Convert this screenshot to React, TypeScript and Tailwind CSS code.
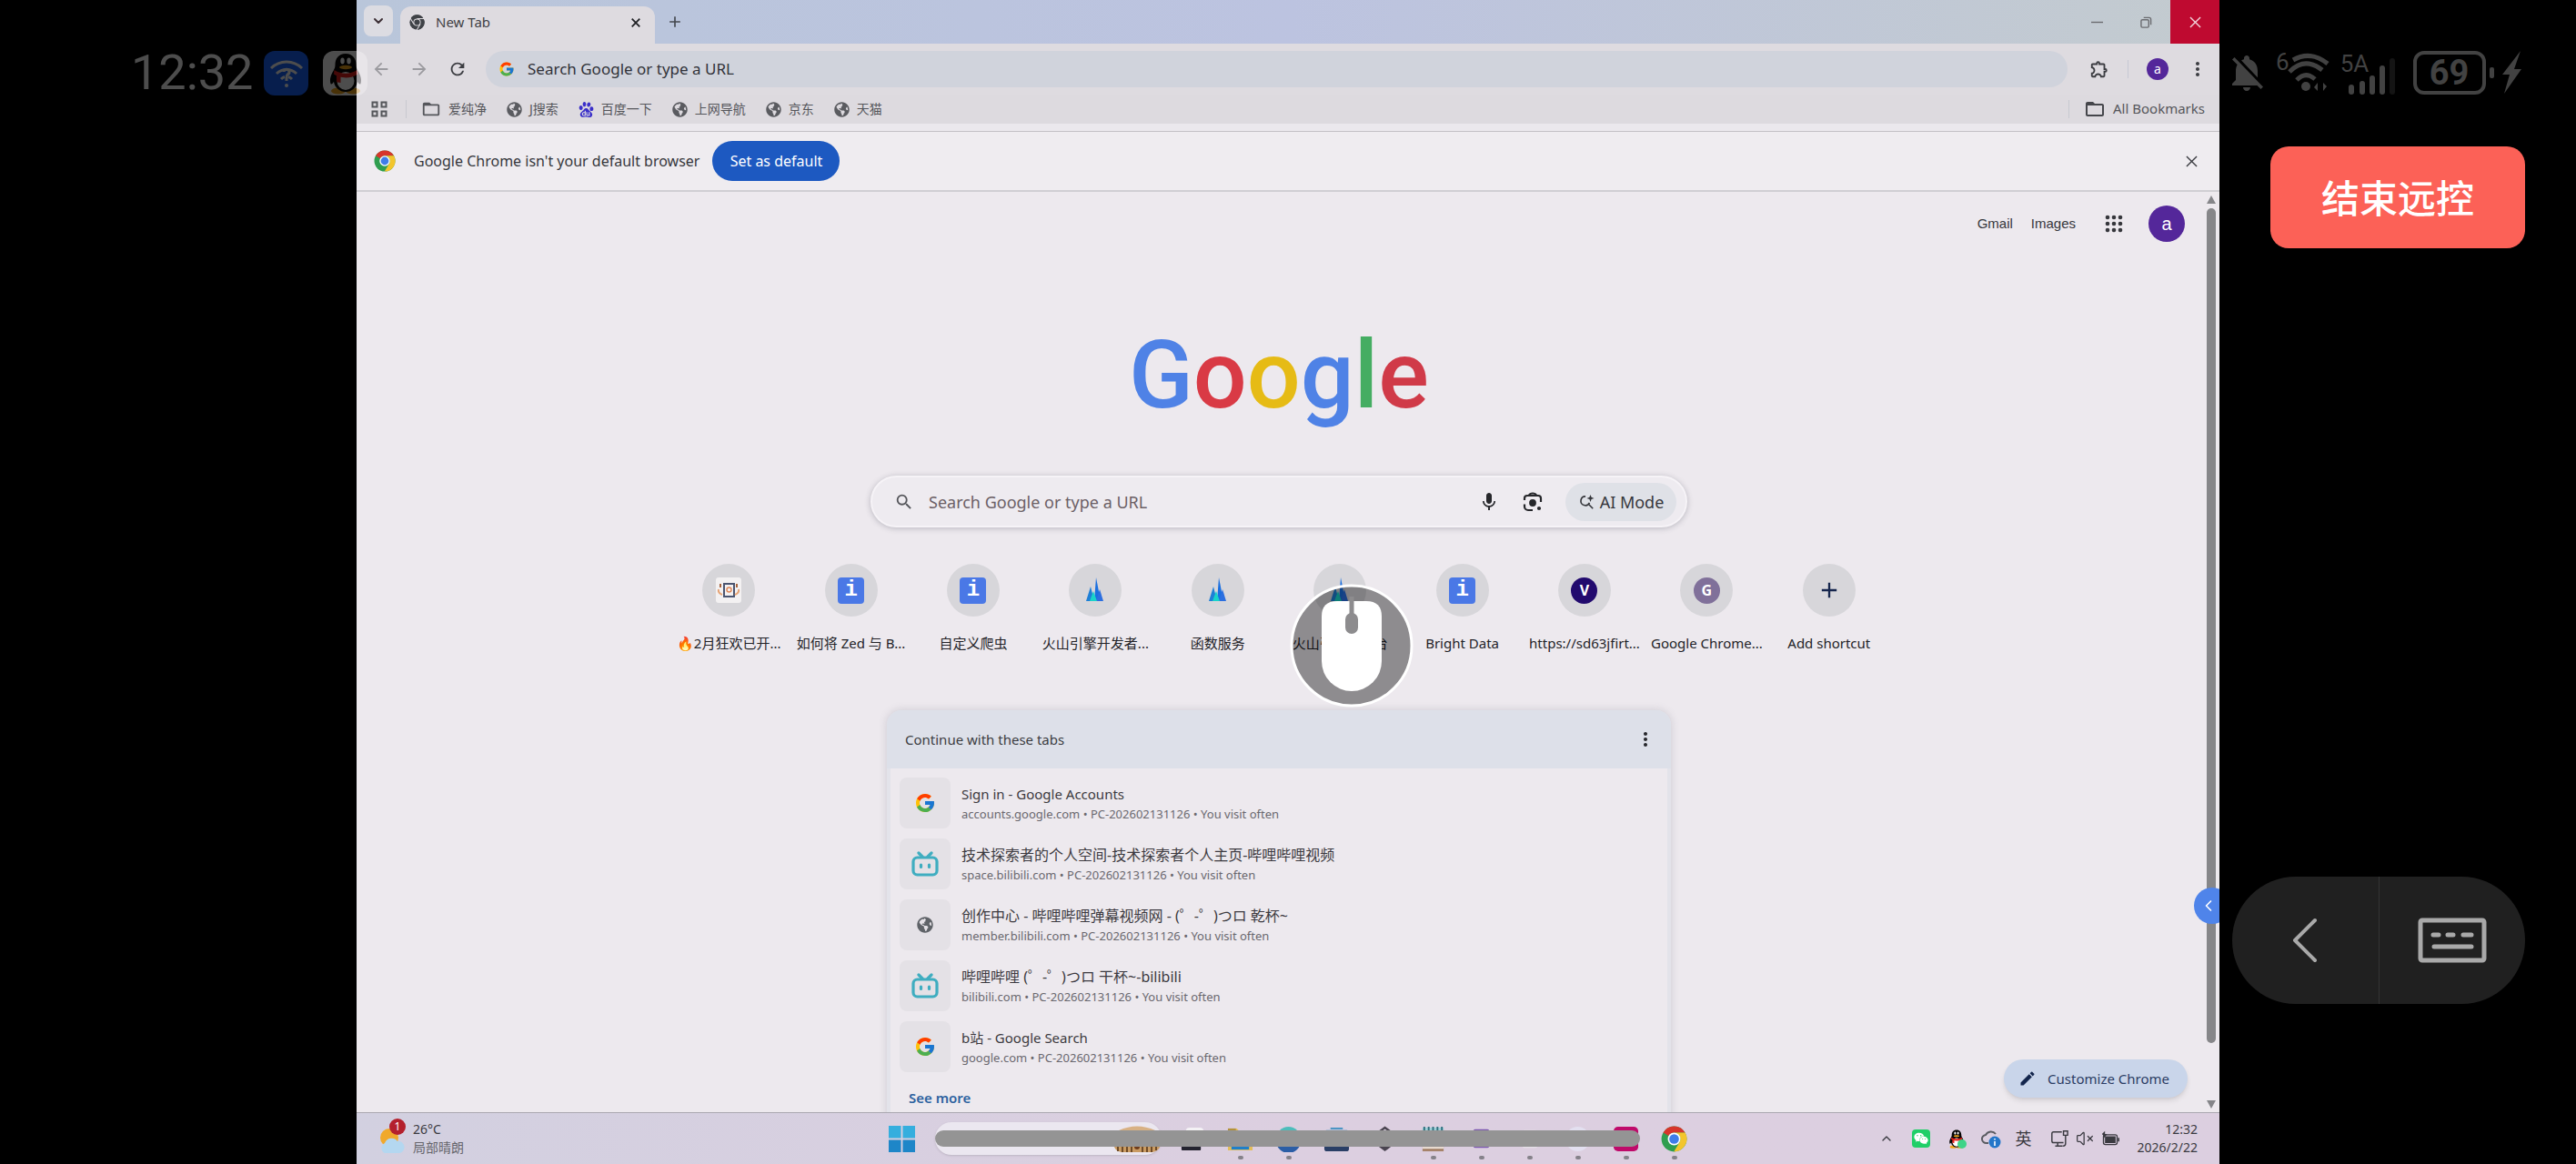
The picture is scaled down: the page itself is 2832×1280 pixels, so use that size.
import type { ReactNode } from "react"
import { FcGoogle } from "react-icons/fc"
import { FaGlobeAmericas, FaWeixin } from "react-icons/fa"
import { SiBaidu } from "react-icons/si"
import {
    MdAdd,
    MdArrowBack,
    MdArrowForward,
    MdEdit,
    MdFolderOpen,
    MdMic,
    MdMoreVert,
    MdNotificationsOff,
    MdOutlineExtension,
    MdRefresh,
    MdSearch,
} from "react-icons/md"
import { ChevronDown, ChevronLeft, ChevronUp, VolumeX } from "lucide-react"

const ChromeLogo = ({ className, mono = false }: { className: string; mono?: boolean }) => {
    const ring = mono ? "#dedbe0" : "#ffffff"
    return (
        <svg viewBox="0 0 48 48" className={className} aria-hidden="true">
            <circle cx="24" cy="24" r="23" fill={mono ? "#3f4247" : "#2f9e4f"} />
            <path d="M24 1a23 23 0 0 1 20 11.6H24a11.5 11.5 0 0 0-10 5.8L4.2 12.3A23 23 0 0 1 24 1z" fill={mono ? "#3f4247" : "#d7352b"} />
            <path d="M44 12.6A23 23 0 0 1 23.5 47L34 29.7A11.5 11.5 0 0 0 24 12.6z" fill={mono ? "#3f4247" : "#f3c52c"} />
            {mono && (
                <g stroke={ring} strokeWidth="3">
                    <path d="M24 12.5H46M14 29.8L3 11M34 29.8L23 48" />
                </g>
            )}
            <circle cx="24" cy="24" r="11.5" fill={ring} />
            <circle cx="24" cy="24" r="8.8" fill={mono ? "#3f4247" : "#3f7de8"} />
        </svg>
    )
}

const Cross = ({ className, strokeWidth }: { className: string; strokeWidth: number }) => (
    <svg viewBox="0 0 14 14" className={className} aria-hidden="true">
        <path d="M1 1l12 12M13 1L1 13" stroke="currentColor" strokeWidth={strokeWidth} />
    </svg>
)

const Penguin = ({ className }: { className: string }) => (
    <svg viewBox="0 0 48 48" className={className} aria-hidden="true">
        <ellipse cx="16" cy="44" rx="8" ry="3.5" fill="#f2a71b" />
        <ellipse cx="32" cy="44" rx="8" ry="3.5" fill="#f2a71b" />
        <path d="M24 3c-8 0-11.5 6-11.5 12 0 3-.5 4-2 7C8 26 6 31 7.500 36c.8 1.500 2.500-.5 3.500-2 1 6 6 11 13 11s12-5 13-11c1 1.500 2.700 3.500 3.500 2C42 31 40 26 37.500 22c-1.500-3-2-4-2-7C35.500 9 32 3 24 3z" fill="#050505" />
        <ellipse cx="24" cy="33" rx="9.5" ry="10" fill="#ffffff" />
        <path d="M11.500 21c8 5 17 5 25 0l1 4.500c-5 3-9 4-13 4l-6-.8V35l-4.500-.7v-7l-3-1.800z" fill="#e3201b" />
        <ellipse cx="20.5" cy="11" rx="2.2" ry="3.4" fill="#ffffff" />
        <ellipse cx="27.5" cy="11" rx="2.2" ry="3.4" fill="#ffffff" />
        <ellipse cx="24" cy="18" rx="7" ry="2.2" fill="#f2a71b" />
    </svg>
)

const PeaksLogo = () => (
    <svg viewBox="0 0 24 30" className="h-[30px] w-6" aria-hidden="true">
        <path d="M13 1l5 26h-7z" fill="#1a6fe0" />
        <path d="M7 11l4 16H2z" fill="#1f7fd6" />
        <path d="M17 14l4 13h-8z" fill="#2c6fe0" />
        <path d="M10 16l4 11H6z" fill="#19d3c9" />
    </svg>
)

const BiliLogo = () => (
    <svg viewBox="0 0 30 28" className="h-7 w-[30px] text-[#3fadc0]" fill="none" stroke="currentColor" strokeWidth="3.2" strokeLinecap="round" aria-hidden="true">
        <rect x="2" y="7" width="26" height="19" rx="4.5" />
        <path d="M8 2l4 4M22 2l-4 4" />
        <path d="M10.500 15v2.500M19.500 15v2.500" />
    </svg>
)

const InfoLogo = () => (
    <span className="flex size-[29px] items-center justify-center rounded-sm bg-[#4a78e6] font-['Liberation_Mono'] text-2xl font-bold text-white">i</span>
)

const FestivalLogo = () => (
    <svg viewBox="0 0 28 28" className="size-7" aria-hidden="true">
        <rect width="28" height="28" rx="3" fill="#f3f1f2" />
        <rect x="9" y="7" width="11" height="14" fill="none" stroke="#4b5570" strokeWidth="2" />
        <circle cx="14.5" cy="13.5" r="2.5" fill="none" stroke="#e0895a" strokeWidth="1.5" />
        <path d="M5 7v4M23 7v4" stroke="#a8643c" strokeWidth="2" />
        <path d="M3 13q-1 4 4 6M25 13q1 4-4 6" fill="none" stroke="#e6a374" strokeWidth="2" />
    </svg>
)

const LetterLogo = ({ letter, className }: { letter: string; className: string }) => (
    <span className={`flex size-[29px] items-center justify-center rounded-full text-base font-bold text-white ${className}`}>{letter}</span>
)

const shortcuts: { label: string; icon: ReactNode }[] = [
    { label: "🔥2月狂欢已开...", icon: <FestivalLogo /> },
    { label: "如何将 Zed 与 B...", icon: <InfoLogo /> },
    { label: "自定义爬虫", icon: <InfoLogo /> },
    { label: "火山引擎开发者...", icon: <PeaksLogo /> },
    { label: "函数服务", icon: <PeaksLogo /> },
    { label: "火山引擎控制台", icon: <PeaksLogo /> },
    { label: "Bright Data", icon: <InfoLogo /> },
    { label: "https://sd63jfirt...", icon: <LetterLogo letter="V" className="bg-[#220a6e]" /> },
    { label: "Google Chrome...", icon: <LetterLogo letter="G" className="bg-[#80709a]" /> },
    { label: "Add shortcut", icon: <MdAdd className="size-7 text-[#16264d]" /> },
]

const recentTabs = [
    { title: "Sign in - Google Accounts", host: "accounts.google.com", icon: <FcGoogle className="size-6" /> },
    { title: "技术探索者的个人空间-技术探索者个人主页-哔哩哔哩视频", host: "space.bilibili.com", icon: <BiliLogo /> },
    { title: "创作中心 - 哔哩哔哩弹幕视频网 - (゜-゜)つロ 乾杯~", host: "member.bilibili.com", icon: <FaGlobeAmericas className="size-[18px] text-[#5f6368]" /> },
    { title: "哔哩哔哩 (゜-゜)つロ 干杯~-bilibili", host: "bilibili.com", icon: <BiliLogo /> },
    { title: "b站 - Google Search", host: "google.com", icon: <FcGoogle className="size-6" /> },
]

const isChinese = (text: string) => /[\u4e00-\u9fff]{2}/.test(text)

const globe = <FaGlobeAmericas className="size-[17px] text-[#5a5b60]" />

const bookmarks = [
    { label: "爱纯净", icon: <MdFolderOpen className="size-[22px]" /> },
    { label: "J搜索", icon: globe },
    { label: "百度一下", icon: <SiBaidu className="size-[17px] text-[#3a2fc9]" /> },
    { label: "上网导航", icon: globe },
    { label: "京东", icon: globe },
    { label: "天猫", icon: globe },
]

const TitleBar = () => (
    <div className="flex h-12 items-end bg-linear-to-r from-[#b9c6da] via-[#bcc3e0] to-[#c3cbcf] pl-2">
        <button aria-label="Search tabs" className="mb-2 flex h-[34px] w-8 items-center justify-center rounded-lg bg-[#dcdce2] text-[#3c2f35]">
            <ChevronDown className="size-4" strokeWidth={3} />
        </button>
        <div className="ml-2 flex h-[41px] w-[280px] items-center rounded-t-xl bg-[#dedbe0] pr-4 pb-1.5 pl-2.5 text-[#3f4045]">
            <ChromeLogo mono className="size-[17px]" />
            <span className="ml-3 flex-1 text-[15px]">New Tab</span>
            <button aria-label="Close tab" className="text-[#1f2024]"><Cross className="size-[10px]" strokeWidth={2.5} /></button>
        </div>
        <button aria-label="New tab" className="mb-3.5 ml-3 text-[#45484f]"><MdAdd className="size-5" /></button>
        <div className="ml-auto flex h-12 text-[#6b6c70]">
            <button aria-label="Minimize" className="flex w-[54px] items-center justify-center">
                <svg viewBox="0 0 14 14" className="size-[13px]"><path d="M0 7h14" stroke="currentColor" strokeWidth="1.5" /></svg>
            </button>
            <button aria-label="Restore" className="flex w-[54px] items-center justify-center">
                <svg viewBox="0 0 14 14" className="size-[13px]" fill="none" stroke="currentColor" strokeWidth="1.5">
                    <rect x="1" y="4" width="9" height="9" rx="1.5" />
                    <path d="M4 1.500h6.500a2 2 0 0 1 2 2V10" />
                </svg>
            </button>
            <button aria-label="Close" className="flex w-[54px] items-center justify-center bg-[#bf0a30] text-[#f1d3da]">
                <Cross className="size-[13px]" strokeWidth={1.5} />
            </button>
        </div>
    </div>
)

const Toolbar = () => (
    <div className="flex h-14 items-center bg-[#dedbe0] pr-3 pl-4">
        <button aria-label="Back" className="text-[#9b9a9f]"><MdArrowBack className="size-[22px]" /></button>
        <button aria-label="Forward" className="ml-5 text-[#9b9a9f]"><MdArrowForward className="size-[22px]" /></button>
        <button aria-label="Reload" className="ml-5 text-[#3c3d42]"><MdRefresh className="size-[22px]" /></button>
        <label className="ml-5 flex h-10 flex-1 items-center rounded-full bg-[#d0d3dc] pl-3.5">
            <FcGoogle className="size-[18px]" />
            <input
                aria-label="Address and search bar"
                placeholder="Search Google or type a URL"
                className="ml-3.5 flex-1 bg-transparent text-[17px] outline-none placeholder:text-[#303239]"
            />
        </label>
        <button aria-label="Extensions" className="ml-6 text-[#3c3d42]"><MdOutlineExtension className="size-[22px]" /></button>
        <span className="ml-5 h-5 w-px bg-[#c6c8d4]" />
        <button aria-label="Profile" className="ml-5 flex size-6 items-center justify-center rounded-full bg-[#54279a] text-sm text-white">a</button>
        <button aria-label="Menu" className="ml-5 text-[#3c3d42]"><MdMoreVert className="size-6" /></button>
    </div>
)

const BookmarksBar = () => (
    <div className="flex h-8 items-center bg-[#dddadf] px-4 text-sm text-[#55565b]">
        <button aria-label="Tab groups">
            <svg viewBox="0 0 18 18" className="size-[18px]" fill="none" stroke="currentColor" strokeWidth="2">
                <path d="M1.500 1.500h5v5h-5zM11.500 1.500h5v5h-5zM1.500 11.500h5v5h-5zM11.500 11.500h5v5h-5z" />
            </svg>
        </button>
        <span className="mr-4 ml-5 h-5 w-px bg-[#c8c9d0]" />
        <nav className="flex items-center gap-[22px]">
            {bookmarks.map((b) => (
                <a key={b.label} href="#" className="flex items-center gap-2">
                    {b.icon}
                    {b.label}
                </a>
            ))}
        </nav>
        <span className="ml-auto h-5 w-px bg-[#c8c9d0]" />
        <button className="ml-4 flex items-center gap-2 text-[15px]">
            <MdFolderOpen className="size-6 text-[#45464b]" />
            All Bookmarks
        </button>
    </div>
)

const InfoBar = () => (
    <div className="flex h-[75px] flex-col bg-[#dddadf]">
        <div className="h-[9px] border-b border-[#c3c1c6] bg-[#ebe8ed]" />
        <div className="flex flex-1 items-center border-b-2 border-[#d0ced3] bg-[#efecf0] pr-6 pl-[19px]">
            <ChromeLogo className="size-6" />
            <span className="ml-5 text-base text-[#36373c]">Google Chrome isn't your default browser</span>
            <button className="ml-3.5 h-11 w-[140px] rounded-full bg-[#1d59c1] text-base text-white">Set as default</button>
            <button aria-label="Dismiss" className="ml-auto text-[#3c3d42]"><Cross className="size-[13px]" strokeWidth={1.5} /></button>
        </div>
    </div>
)

const SearchBox = () => (
    <label className="mt-12 flex h-[57px] w-[898px] shrink-0 items-center rounded-full border-2 border-[#f6f3f7] bg-[#eeebf0] pr-2.5 pl-6 shadow-[0_1px_6px_rgba(60,64,80,0.3)]">
        <MdSearch className="size-[22px] text-[#55565b]" />
        <input
            aria-label="Search"
            placeholder="Search Google or type a URL"
            className="ml-4 flex-1 bg-transparent text-lg outline-none placeholder:text-[#6b6066]"
        />
        <button aria-label="Search by voice"><MdMic className="size-6 text-[#26272b]" /></button>
        <button aria-label="Search by image" className="ml-6">
            <svg viewBox="0 0 24 24" className="size-6 text-[#26272b]" fill="none" stroke="currentColor" strokeWidth="2.2">
                <path d="M3 10V8a3 3 0 0 1 3-3h12a3 3 0 0 1 3 3v4M3 14.500V17a4 4 0 0 0 4 4h5M8 4.500Q9 2.500 12 2.500t4 2" />
                <circle cx="12" cy="13" r="2.8" fill="currentColor" />
                <circle cx="19" cy="19" r="1" fill="currentColor" />
            </svg>
        </button>
        <button className="ml-6 flex h-[42px] w-[122px] items-center justify-center gap-1.5 rounded-full bg-[#dfe1e7] text-lg text-[#36373c]">
            <svg viewBox="0 0 20 20" className="size-[18px] shrink-0" fill="none" stroke="currentColor" strokeWidth="1.8" aria-hidden="true">
                <path d="M9 3.200a5.500 5.500 0 1 0 4.800 7.800M12 12l6 6" />
                <path d="M15 1l1.200 3.300L19.500 5.500l-3.300 1.200L15 10l-1.200-3.300L10.500 5.500l3.300-1.200z" fill="currentColor" stroke="none" />
            </svg>
            AI Mode
        </button>
    </label>
)

const Shortcuts = () => (
    <div className="mt-10 grid w-[1344px] shrink-0 grid-cols-10">
        {shortcuts.map((s, i) => (
            <a key={i} href="#" className="flex flex-col items-center gap-[17px]">
                <span className="flex size-[58px] items-center justify-center rounded-full bg-[#d7d6da]">{s.icon}</span>
                <span className="text-center text-[15px] leading-6 whitespace-nowrap text-[#232328]">{s.label}</span>
            </a>
        ))}
    </div>
)

const TabsCard = () => (
    <section className="mt-[62px] w-[862px] shrink-0 rounded-t-2xl bg-[#e3e3ea] px-1 shadow-[0_0_10px_rgba(90,90,110,0.22)]">
        <div className="-mx-1 flex h-16 items-center justify-between rounded-t-2xl bg-[#dde0e9] pr-4 pl-5 text-[15px] text-[#3c3d42]">
            <h2>Continue with these tabs</h2>
            <button aria-label="More"><MdMoreVert className="size-6 text-[#26272b]" /></button>
        </div>
        <ul className="flex flex-col gap-[11px] bg-[#ede9ee] px-2.5 pt-2.5">
            {recentTabs.map((t) => (
                <li key={t.title}>
                    <a href="#" className="flex items-center gap-3">
                        <span className="flex size-14 items-center justify-center rounded-lg bg-[#e4e1e6]">{t.icon}</span>
                        <span className="flex flex-col">
                            <span className={`leading-6 text-[#3c3a40] ${isChinese(t.title) ? "text-base" : "text-[15px]"}`}>{t.title}</span>
                            <span className="text-[13px] leading-5 text-[#6a686e]">{t.host} • PC-202602131126 • You visit often</span>
                        </span>
                    </a>
                </li>
            ))}
        </ul>
        <div className="bg-[#ede9ee] px-5 pt-4 pb-8">
            <button className="text-[15px] font-semibold text-[#2c629f]">See more</button>
        </div>
    </section>
)

const NewTabPage = () => (
    <main className="relative flex min-h-0 flex-1 bg-[#ede9ee]">
        <div className="flex flex-1 flex-col items-center overflow-hidden">
            <div className="flex h-[70px] shrink-0 items-center self-end pr-[18px] font-['Liberation_Sans'] text-[15px] text-[#36373c]">
                <a href="#">Gmail</a>
                <a href="#" className="ml-5">Images</a>
                <button aria-label="Google apps" className="ml-8">
                    <svg viewBox="0 0 20 20" className="size-5" fill="currentColor">
                        <circle cx="3" cy="3" r="2.3" /><circle cx="10" cy="3" r="2.3" /><circle cx="17" cy="3" r="2.3" />
                        <circle cx="3" cy="10" r="2.3" /><circle cx="10" cy="10" r="2.3" /><circle cx="17" cy="10" r="2.3" />
                        <circle cx="3" cy="17" r="2.3" /><circle cx="10" cy="17" r="2.3" /><circle cx="17" cy="17" r="2.3" />
                    </svg>
                </button>
                <button aria-label="Google account" className="ml-7 flex size-10 items-center justify-center rounded-full bg-[#54279a] text-xl text-white">a</button>
            </div>
            <div className="mt-[78px] h-[116px] shrink-0 font-[Roboto] text-[104px] leading-[108px] font-medium" aria-label="Google">
                <span className="text-[#4f82e6]">G</span>
                <span className="text-[#d93a45]">o</span>
                <span className="text-[#e6bb15]">o</span>
                <span className="text-[#4f82e6]">g</span>
                <span className="text-[#45ad62]">l</span>
                <span className="text-[#d03a48]">e</span>
            </div>
            <SearchBox />
            <Shortcuts />
            <TabsCard />
        </div>
        <div className="flex w-5 flex-col items-end gap-1 py-1 pr-1">
            <svg viewBox="0 0 10 10" className="size-[10px]"><path d="M5 0l5 9H0z" fill="#858589" /></svg>
            <div className="mb-[58px] w-[10px] flex-1 rounded-full bg-[#868689]" />
            <svg viewBox="0 0 10 10" className="size-[10px]"><path d="M5 10l5-9H0z" fill="#858589" /></svg>
        </div>
        <button className="absolute right-[35px] bottom-4 flex h-[42px] items-center gap-3 rounded-full bg-[#c9d5ea] pr-5 pl-4 text-[15px] text-[#2b3c63] shadow-md">
            <MdEdit className="size-5 text-[#14264d]" />
            Customize Chrome
        </button>
    </main>
)

// Upper and lower slices of the icons stay visible around the grey handle
const taskIcons: { name: string; running: boolean; art: ReactNode }[] = [
    { name: "Task view", running: false, art: <><rect x="8" y="2" width="20" height="12" rx="4" fill="#f4f2f5" /><rect x="3" y="14" width="22" height="14" rx="1" fill="#23232f" /></> },
    { name: "File Explorer", running: true, art: <><path d="M1 3h10l3 3h15v22H1z" fill="#e3bd5a" /><rect x="1" y="3" width="9" height="8" fill="#b3923c" /><rect x="5" y="20" width="20" height="7" fill="#1f7fc9" /></> },
    { name: "Edge", running: true, art: <><circle cx="15" cy="15" r="14" fill="#4dbdbb" /><path d="M1 17a14 14 0 0 0 28 0z" fill="#2c5ea6" /></> },
    { name: "Store", running: false, art: <><path d="M8 3h14M3 6h24" stroke="#3a8fc0" strokeWidth="2" /><path d="M1 7h28v19q0 3-3 3H4q-3 0-3-3z" fill="#2a3f66" /></> },
    { name: "Editor", running: false, art: <><path d="M15 2l12 9H3z" fill="none" stroke="#4a4550" strokeWidth="2.5" /><path d="M3 20h24l-12 9z" fill="#4a4550" /></> },
    { name: "Notepad", running: true, art: <><rect x="3" y="4" width="24" height="25" fill="#a6836a" /><path d="M3 2h24v9H3z" fill="#9ed0d8" /><path d="M5 1v7M10 1v7M15 1v7M20 1v7M25 1v7" stroke="#31707e" strokeWidth="2" /><path d="M3 25h24" stroke="#efe6df" strokeWidth="2" /></> },
    { name: "Terminal", running: true, art: <rect x="6" y="4" width="18" height="21" rx="2" fill="#7c57b0" /> },
    { name: "Notes", running: true, art: <rect x="7" y="5" width="17" height="20" rx="2" fill="#e6e1e8" /> },
    { name: "Cloud", running: true, art: <circle cx="15" cy="15" r="14" fill="#e3e0f0" /> },
    { name: "Video", running: true, art: <rect x="1" y="1" width="28" height="28" rx="5" fill="#bf0a6a" /> },
]

const Taskbar = () => (
    <footer className="grid h-[57px] grid-cols-[1fr_auto_1fr] items-center border-t border-[#aaa7b0] bg-linear-to-r from-[#d2d0e0] via-[#dccfe0] to-[#dccfe0] text-sm text-[#3a3a40]">
        <button className="flex items-center gap-2 pl-6 text-left">
            <span className="relative">
                <svg viewBox="0 0 30 36" className="h-9 w-[30px]" aria-hidden="true">
                    <circle cx="12" cy="17" r="10" fill="#f0a92c" />
                    <path d="M7 34a6 6 0 0 1 0-11 8 8 0 0 1 14-2 6.500 6.500 0 0 1 2 13z" fill="#b4d7f0" />
                </svg>
                <span className="absolute -top-1 left-3 flex size-[18px] items-center justify-center rounded-full bg-[#b4202c] text-xs text-white">1</span>
            </span>
            <span className="flex flex-col leading-5">
                <span>26°C</span>
                <span className="text-[#66666c]">局部晴朗</span>
            </span>
        </button>
        <div className="flex items-center">
            <button aria-label="Start" className="flex w-[53px] justify-center">
                <svg viewBox="0 0 30 30" className="size-[29px]" aria-hidden="true">
                    <path d="M0 0h14v14H0zM16 0h14v14H16z" fill="#35aede" />
                    <path d="M0 16h14v14H0zM16 16h14v14H16z" fill="#1e86c8" />
                </svg>
            </button>
            <div className="relative ml-2.5 flex items-center gap-[7px]">
                <div className="flex h-9 w-[249px] items-center justify-end rounded-full bg-[#ebe7f0] shadow-sm">
                    <svg viewBox="0 0 54 32" className="h-8 w-[54px]" aria-hidden="true">
                        <path d="M7 7q20-9 40 0v5H7z" fill="#d8b184" />
                        <path d="M0 20h54q-2 10-10 11H10Q2 30 0 20z" fill="#c99b62" />
                        <path d="M6 23v7M11 23v8M16 23v8M21 23v8M33 23v8M38 23v8M43 23v8M48 23v6" stroke="#6e4a26" strokeWidth="2" />
                        <circle cx="27" cy="25" r="3" fill="#6e3c1c" />
                    </svg>
                </div>
                <div className="flex">
                    {taskIcons.map((t) => (
                        <button key={t.name} aria-label={t.name} className="relative flex w-[53px] justify-center">
                            <svg viewBox="0 0 30 30" className="size-[29px]">{t.art}</svg>
                            {t.running && <span className="absolute -bottom-2 h-1 w-1.5 rounded-full bg-[#85828a]" />}
                        </button>
                    ))}
                    <button aria-label="Chrome" className="relative flex w-[53px] justify-center">
                        <ChromeLogo className="size-[29px]" />
                        <span className="absolute -bottom-2 h-1 w-1.5 rounded-full bg-[#85828a]" />
                    </button>
                </div>
                <div className="absolute right-16 left-0 h-[18px] rounded-full bg-[#949494]" />
            </div>
        </div>
        <div className="flex items-center justify-end pr-6">
            <ChevronUp className="size-4" />
            <span className="ml-5 flex size-5 items-center justify-center rounded-sm bg-[#20cf68]"><FaWeixin className="size-4 text-white" /></span>
            <span className="relative ml-[18px]">
                <Penguin className="size-[22px]" />
                <span className="absolute right-0 bottom-0 size-2.5 rounded-full bg-[#3fd488]" />
            </span>
            <span className="relative ml-4">
                <svg viewBox="0 0 22 22" className="size-[22px]" fill="none" stroke="#5a5c62" strokeWidth="2" aria-hidden="true">
                    <path d="M8 16H6a4.500 4.500 0 0 1-1-9 6.500 6.500 0 0 1 11-1" />
                    <circle cx="15" cy="15" r="6.5" fill="#2376c9" stroke="none" />
                    <path d="M15 14v5M15 11v1.500" stroke="#ffffff" strokeWidth="1.6" />
                </svg>
            </span>
            <span className="ml-4 text-lg">英</span>
            <svg viewBox="0 0 22 22" className="ml-5 size-5" fill="none" stroke="currentColor" strokeWidth="1.6" aria-hidden="true">
                <path d="M14 3H4a2 2 0 0 0-2 2v9a2 2 0 0 0 2 2h12M6 20h9M9 16v4M16 2h5v5h-5zM18.500 7v10a3 3 0 0 1-3 3" />
            </svg>
            <VolumeX className="ml-2 size-5" strokeWidth={1.5} />
            <svg viewBox="0 0 24 22" className="ml-2 size-5" aria-hidden="true">
                <rect x="3" y="6" width="18" height="13" rx="2.5" fill="none" stroke="currentColor" strokeWidth="1.6" />
                <path d="M5 8h14v9H5zM22 10h2v5h-2zM1 5l4-4v4h3L3 11V7z" fill="currentColor" />
            </svg>
            <div className="ml-5 text-right leading-5">
                <div>12:32</div>
                <div>2026/2/22</div>
            </div>
        </div>
    </footer>
)

const MouseOverlay = () => (
    <div className="absolute top-[55.5%] left-[53.4%] -translate-x-1/2 -translate-y-1/2">
        <svg viewBox="0 0 136 136" className="size-[136px]" aria-hidden="true">
            <circle cx="68" cy="68" r="66" fill="#000000" fillOpacity="0.4" stroke="#ffffff" strokeWidth="3" />
            <path d="M35 36q0-17 17-17h32q17 0 17 17v49a33 33 0 0 1-66 0z" fill="#ffffff" />
            <path d="M68 14v20" stroke="#8d8c8e" strokeWidth="5" />
            <rect x="61" y="32" width="14" height="23" rx="7" fill="#8d8c8e" />
        </svg>
    </div>
)

const App = () => {
    return (
        <div className="flex h-screen overflow-hidden bg-black font-['Noto_Sans','Noto_Sans_CJK_SC',sans-serif]">
            <aside className="relative z-10 min-w-0 flex-1">
                <div className="flex items-center gap-4 pt-[46px] pl-36 opacity-30">
                    <span className="w-[130px] shrink-0 font-[Roboto] text-[54px] leading-[68px] text-white">12:32</span>
                    <span className="flex size-[49px] shrink-0 items-center justify-center rounded-xl bg-[#1763ff]">
                        <svg viewBox="0 0 40 40" className="size-10" fill="none" stroke="#ffffff" strokeWidth="3" aria-hidden="true">
                            <path d="M3 15a24 24 0 0 1 34 0M9 21a16 16 0 0 1 22 0M14 27a9 9 0 0 1 4-2.500M26 27a9 9 0 0 0-4-2.500" />
                            <path d="M17 19a3 3 0 1 1 4 3q-1 1-1 4v3" />
                            <circle cx="20" cy="34" r="2" fill="#ffffff" stroke="none" />
                        </svg>
                    </span>
                    <span className="flex size-[49px] shrink-0 items-center justify-center rounded-xl bg-white">
                        <Penguin className="size-12" />
                    </span>
                </div>
            </aside>

            <div className="relative flex aspect-[8/5] h-full shrink-0 flex-col overflow-hidden">
                <TitleBar />
                <Toolbar />
                <BookmarksBar />
                <InfoBar />
                <NewTabPage />
                <Taskbar />
                <MouseOverlay />
                <button aria-label="Open side panel" className="absolute top-[976px] -right-3 flex size-10 items-center rounded-full bg-[#4f84ea] pl-1.5 text-white">
                    <ChevronLeft className="size-5" />
                </button>
            </div>

            <aside className="flex min-w-0 flex-1 flex-col">
                <div className="flex h-[161px] shrink-0 items-start pt-14 pl-2.5 font-[Roboto] text-[#424242]">
                    <MdNotificationsOff className="-ml-1 size-12 shrink-0" />
                    <span className="ml-2 flex shrink-0">
                        <span className="text-[26px] leading-6">6</span>
                        <svg viewBox="0 0 46 44" className="-ml-0.5 h-11 w-[46px]" fill="none" stroke="currentColor" strokeWidth="5" aria-hidden="true">
                            <path d="M6 10q19-11 38 4M2 23q17-17 36-2M10 32q10-10 20-1" />
                            <circle cx="20" cy="39" r="5" fill="currentColor" stroke="none" />
                            <path d="M33 35v9l-4-4zM39 35v9l4-5z" fill="currentColor" stroke="none" />
                        </svg>
                    </span>
                    <span className="relative ml-3 w-[60px] shrink-0">
                        <span className="block text-[26px] leading-7">5A</span>
                        <svg viewBox="0 0 60 44" className="absolute top-1 left-0 h-11 w-[60px]" stroke="currentColor" strokeWidth="6" strokeLinecap="round" aria-hidden="true">
                            <path d="M12 36v5M24 32v9M35 26v15M46 15v26" />
                            <path d="M57 7v34" strokeOpacity="0.3" />
                        </svg>
                    </span>
                    <span className="ml-5 flex h-12 w-20 shrink-0 items-center justify-center rounded-xl border-4 border-current text-[38px] font-bold">69</span>
                    <svg viewBox="0 0 36 48" className="ml-1 h-12 w-9 shrink-0" fill="currentColor" aria-hidden="true">
                        <rect x="0" y="18" width="5" height="12" rx="2" />
                        <path d="M34 0L14 26h8L16 47 35 20h-8z" />
                    </svg>
                </div>
                <button className="mr-14 ml-auto h-28 w-[280px] shrink-0 rounded-[20px] bg-[#fc6157] text-[42px] font-medium text-white">结束远控</button>
                <div className="mt-auto mr-14 mb-44 ml-auto flex h-[140px] w-[322px] shrink-0 overflow-hidden rounded-full bg-[#202020] text-[#a9a9a9]">
                    <button aria-label="Back" className="flex flex-1 items-center justify-center border-r border-[#343434]">
                        <svg viewBox="0 0 28 50" className="h-[50px] w-7" fill="none" stroke="currentColor" strokeWidth="4" strokeLinecap="round" strokeLinejoin="round"><path d="M25 3L3 25l22 22" /></svg>
                    </button>
                    <button aria-label="Keyboard" className="flex flex-1 items-center justify-center">
                        <svg viewBox="0 0 76 50" className="h-[50px] w-[76px]" fill="none" stroke="currentColor" strokeWidth="5" strokeLinejoin="round">
                            <rect x="3" y="3" width="70" height="44" rx="2" />
                            <path d="M17 19h6M33 19h6M50 19h9M18 32h41" strokeLinecap="round" />
                        </svg>
                    </button>
                </div>
            </aside>
        </div>
    )
}

export default App
